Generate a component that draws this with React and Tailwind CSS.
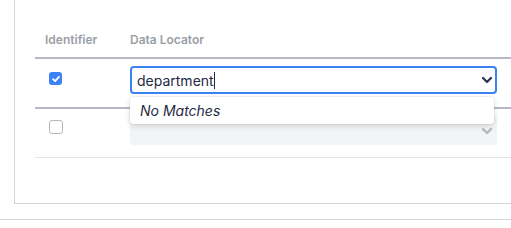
import { ChevronDown } from "lucide-react";

export default function App() {
  return (
    <div className="w-[511px] h-[228px] bg-white overflow-hidden font-['Inter',sans-serif]">
      {/* Panel */}
      <div className="ml-[14px] h-[204px] border-l border-b border-[#d6d6d9] pl-[20px]">
        {/* Header */}
        <div className="flex pt-[32px] pb-[9px] border-b-2 border-[#b6b9c2] text-[12px] leading-4 font-semibold text-[#9a9ea6]">
          <div className="w-[95px] pl-[10px]">Identifier</div>
          <div>Data Locator</div>
        </div>

        {/* Row 1 (focused) */}
        <div className="flex pt-[7px] pb-[13px] border-b-2 border-[#b6b9c2]">
          <div className="w-[95px] pl-[14px] pt-[6px]">
            <div className="w-[13px] h-[13px] rounded-[3px] bg-[#3b82f6] flex items-center justify-center">
              <svg viewBox="0 0 12 12" className="w-[10px] h-[10px]" fill="none" stroke="white" strokeWidth="2.2" strokeLinecap="round" strokeLinejoin="round">
                <path d="M2.5 6.2 L5 8.6 L9.6 3.4" />
              </svg>
            </div>
          </div>
          <div className="relative">
            <div className="w-[367px] h-[28px] rounded-[4px] border-2 border-[#3b82f6] flex items-center justify-between pl-[5px] pr-0">
              <span className="text-[14px] text-[#1f2a44] flex items-center">
                department<span className="inline-block w-px h-[17px] bg-[#1f2a44]" />
              </span>
              <ChevronDown className="w-[16px] h-[16px] text-[#2f3a52]" strokeWidth={3.5} />
            </div>
            {/* Dropdown */}
            <div className="absolute z-10 left-0 top-[31px] w-[364px] h-[27px] bg-white rounded-[4px] shadow-[0_2px_6px_rgba(0,0,0,0.15),0_0_0_1px_rgba(0,0,0,0.04)] flex items-center pl-[10px]">
              <span className="italic text-[14px] text-[#1f2a44]">No Matches</span>
            </div>
          </div>
        </div>

        {/* Row 2 */}
        <div className="flex pt-[7px] pb-[12px] border-b border-[#e3e4e7]">
          <div className="w-[95px] pl-[14px] pt-[4px]">
            <div className="w-[14px] h-[14px] rounded-[3px] border border-[#b5b8bf] bg-white" />
          </div>
          <div className="w-[367px] h-[29px] rounded-[4px] bg-[#f3f4f6] flex items-center justify-end pr-[2px]">
            <ChevronDown className="w-[16px] h-[16px] text-[#b4b8c0]" strokeWidth={3.5} />
          </div>
        </div>
      </div>
      <div className="mt-[15px] border-t border-[#d6d6d9]" />
    </div>
  );
}
